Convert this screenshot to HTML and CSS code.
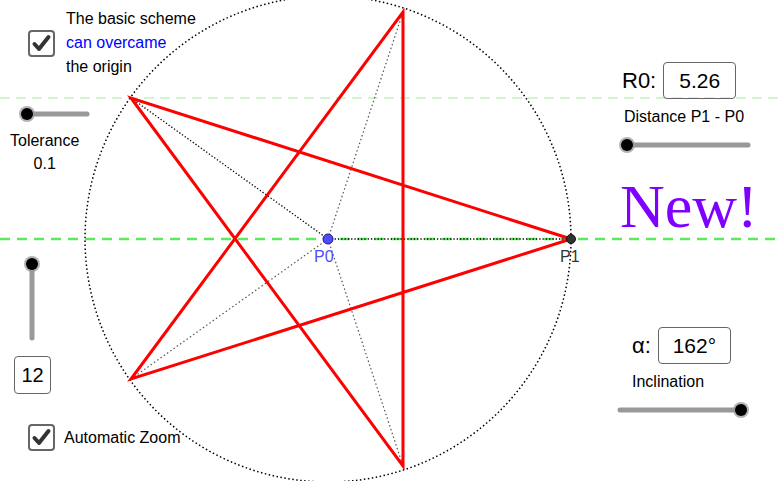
FILE: index.html
```html
<!DOCTYPE html>
<html>
<head>
<meta charset="utf-8">
<link rel="stylesheet" href="styles.css">
</head>
<body>
<div class="stage">
  <svg class="canvas" width="780" height="481" viewBox="0 0 780 481">
    <line x1="0" y1="98" x2="780" y2="98" class="g-light"/>
    <line x1="0" y1="239" x2="780" y2="239" class="g-strong"/>
    <circle cx="328" cy="239" r="243" class="circ"/>
    <line x1="328" y1="239" x2="403" y2="12" class="dot-gray"/>
    <line x1="328" y1="239" x2="403" y2="466" class="dot-gray"/>
    <line x1="328" y1="239" x2="131" y2="379" class="dot-gray"/>
    <line x1="328" y1="239" x2="131" y2="98" class="dot-black"/>
    <line x1="328" y1="239" x2="571" y2="239" class="dot-black"/>
    <polygon points="571,239 131,98 403,466 403,12 131,379" class="star"/>
    <circle cx="328" cy="239" r="5" class="p0"/>
    <circle cx="571" cy="239" r="4.5" class="p1"/>
    <text x="314" y="262" class="lbl lbl-p0">P0</text>
    <text x="560" y="262" class="lbl lbl-p1">P1</text>
  </svg>
  <div class="overlay">
    <div class="left">
      <div class="scheme">
        <span class="cb"><svg width="23" height="23" viewBox="0 0 23 23"><path d="M4.5 12 L9 17 L18.5 5" class="tick"/></svg></span>
        <div class="scheme-text">
          <div>The basic scheme</div>
          <div class="blue">can overcame</div>
          <div>the origin</div>
        </div>
      </div>
      <svg class="sl-tol" width="80" height="20" viewBox="0 0 80 20"><line x1="10" y1="10" x2="70" y2="10" class="track"/><circle cx="10" cy="10" r="8" class="halo"/><circle cx="10" cy="10" r="6" class="knob"/></svg>
      <div class="tol">
        <div class="tol-name">Tolerance</div>
        <div class="tol-val">0.1</div>
      </div>
      <svg class="sl-vert" width="20" height="94" viewBox="0 0 20 94"><line x1="10" y1="10" x2="10" y2="84" class="track"/><circle cx="10" cy="10" r="8" class="halo"/><circle cx="10" cy="10" r="6" class="knob"/></svg>
      <div class="numbox">12</div>
      <div class="autozoom">
        <span class="cb"><svg width="23" height="23" viewBox="0 0 23 23"><path d="M4.5 12 L9 17 L18.5 5" class="tick"/></svg></span>
        <span class="az-text">Automatic Zoom</span>
      </div>
    </div>
    <div class="right">
      <div class="r0row">
        <span class="big">R0:</span>
        <span class="inbox">5.26</span>
      </div>
      <div class="caption cap-dist">Distance P1 - P0</div>
      <svg class="sl-dist" width="141" height="20" viewBox="0 0 141 20"><line x1="10" y1="10" x2="131" y2="10" class="track"/><circle cx="10" cy="10" r="8" class="halo"/><circle cx="10" cy="10" r="6" class="knob"/></svg>
      <div class="new">New!</div>
      <div class="arow">
        <span class="big">α:</span>
        <span class="inbox">162°</span>
      </div>
      <div class="caption cap-inc">Inclination</div>
      <svg class="sl-inc" width="141" height="20" viewBox="0 0 141 20"><line x1="10" y1="10" x2="131" y2="10" class="track"/><circle cx="131" cy="10" r="8" class="halo"/><circle cx="131" cy="10" r="6" class="knob"/></svg>
    </div>
  </div>
</div>
</body>
</html>
```

FILE: styles.css
```css
html, body {
  margin: 0;
  padding: 0;
  background: #ffffff;
}
body {
  font-family: "Liberation Sans", Arial, sans-serif;
  color: #000;
}
.stage {
  position: relative;
  width: 780px;
  height: 481px;
  overflow: hidden;
}
.canvas {
  position: absolute;
  left: 0;
  top: 0;
}
.g-light {
  stroke: #9ef09e;
  stroke-width: 1;
  stroke-dasharray: 10 6;
}
.g-strong {
  stroke: #5ee85e;
  stroke-width: 2.5;
  stroke-dasharray: 10 7;
}
.circ {
  fill: none;
  stroke: #000;
  stroke-width: 1.5;
  stroke-dasharray: 1.5 2.5;
}
.dot-gray {
  stroke: #555;
  stroke-width: 1.2;
  stroke-dasharray: 1.5 2.5;
}
.dot-black {
  stroke: #000;
  stroke-width: 1.3;
  stroke-dasharray: 1.3 2;
}
.star {
  fill: none;
  stroke: #ff0000;
  stroke-width: 3;
  stroke-linejoin: miter;
}
.p0 {
  fill: #4d4dff;
  stroke: #1a1a80;
  stroke-width: 1;
}
.p1 {
  fill: #333;
  stroke: #111;
  stroke-width: 1;
}
.lbl {
  font-family: "Liberation Sans", Arial, sans-serif;
  font-size: 16px;
}
.lbl-p0 { fill: #4d4dff; }
.lbl-p1 { fill: #333; }

.overlay {
  position: relative;
  display: flex;
  justify-content: space-between;
  width: 780px;
  height: 481px;
}
.left {
  width: 200px;
  display: flex;
  flex-direction: column;
  align-items: flex-start;
}
.right {
  width: 180px;
  display: flex;
  flex-direction: column;
  align-items: flex-start;
}
.cb {
  box-sizing: border-box;
  width: 27px;
  height: 27px;
  border: 2px solid #666;
  border-radius: 4px;
  background: #fff;
  display: flex;
}
.tick {
  fill: none;
  stroke: #333;
  stroke-width: 4;
  stroke-linecap: round;
  stroke-linejoin: round;
}
.scheme {
  margin-top: 7px;
  padding-left: 28px;
  display: flex;
  align-items: center;
  gap: 11px;
}
.scheme-text {
  font-size: 16px;
  line-height: 24px;
}
.blue { color: #0000ff; }
.track {
  stroke: #999;
  stroke-width: 5;
  stroke-linecap: round;
}
.halo { fill: #999; opacity: 0.75; }
.knob { fill: #000; }
.sl-tol {
  margin-top: 25px;
  margin-left: 17px;
}
.tol {
  margin-top: 8px;
  margin-left: 10px;
  text-align: center;
  font-size: 16px;
  line-height: 18px;
}
.tol-val { margin-top: 5px; }
.sl-vert {
  margin-top: 81px;
  margin-left: 22px;
}
.numbox {
  box-sizing: border-box;
  margin-top: 8px;
  margin-left: 14px;
  width: 37px;
  height: 38px;
  border: 1px solid #666;
  border-radius: 4px;
  font-size: 20px;
  display: flex;
  align-items: center;
  justify-content: center;
}
.autozoom {
  margin-top: 30px;
  padding-left: 28px;
  display: flex;
  align-items: center;
  gap: 9px;
  font-size: 16px;
}
.big {
  font-size: 22px;
}
.inbox {
  box-sizing: border-box;
  width: 73px;
  height: 37px;
  border: 1px solid #666;
  border-radius: 4px;
  font-size: 21px;
  display: flex;
  align-items: center;
  justify-content: center;
}
.r0row {
  margin-top: 62px;
  padding-left: 22px;
  display: flex;
  align-items: center;
  gap: 7px;
}
.caption {
  font-size: 16px;
  line-height: 18px;
}
.cap-dist {
  margin-top: 9px;
  margin-left: 24px;
}
.sl-dist {
  margin-top: 9px;
  margin-left: 17px;
}
.new {
  margin-top: 20px;
  margin-left: 20px;
  font-family: "Liberation Serif", "Times New Roman", serif;
  font-size: 62px;
  line-height: 62px;
  color: #7f00ff;
}
.arow {
  margin-top: 90px;
  padding-left: 32px;
  display: flex;
  align-items: center;
  gap: 7px;
}
.cap-inc {
  margin-top: 9px;
  margin-left: 32px;
}
.sl-inc {
  margin-top: 9px;
  margin-left: 10px;
}
```
